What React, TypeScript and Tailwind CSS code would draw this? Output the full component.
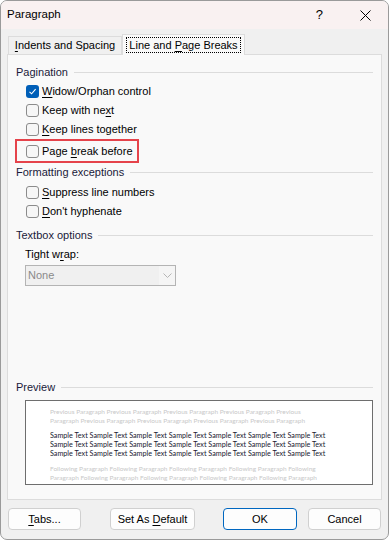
import React from 'react';

const font = { fontFamily: '"Segoe UI", "Liberation Sans", Arial, sans-serif' };

function U({ children }: { children: React.ReactNode }) {
  return <span className="underline underline-offset-2 decoration-1">{children}</span>;
}

function Check({ checked, label }: { checked?: boolean; label: React.ReactNode }) {
  return (
    <div className="flex items-center h-[19px] whitespace-nowrap">
      {checked ? (
        <div className="w-[13px] h-[13px] shrink-0 rounded-[3px] bg-[#005fb8] flex items-center justify-center">
          <svg width="9" height="9" viewBox="0 0 9 9" fill="none">
            <path d="M1.5 4.8 L3.6 6.8 L7.6 2.2" stroke="white" strokeWidth="1.1" />
          </svg>
        </div>
      ) : (
        <div className="w-[13px] h-[13px] shrink-0 rounded-[3px] border border-[#8b8b8b] bg-[#f6f6f6]" />
      )}
      <span className="ml-[3px] text-[11px] text-black leading-none">{label}</span>
    </div>
  );
}

function Section({ title }: { title: string }) {
  return (
    <div className="flex items-center h-[18px]">
      <span className="text-[11px] text-[#1a1a3a] leading-none">{title}</span>
      <div className="flex-1 ml-[6px] h-px bg-[#dcdcdc]" />
    </div>
  );
}

function Btn({ children, primary, w }: { children: React.ReactNode; primary?: boolean; w: string }) {
  return (
    <div
      className={`${w} h-[22px] rounded-[4px] border bg-[#fdfdfd] flex items-center justify-center text-[11px] text-black ${
        primary ? 'border-[#0067c0]' : 'border-[#d0d0d0]'
      }`}
    >
      {children}
    </div>
  );
}

const prev = Array(10).fill('Previous Paragraph').join(' ');
const sample = Array(21).fill('Sample Text').join(' ');
const follow = Array(16).fill('Following Paragraph').join(' ');

export default function App() {
  return (
    <div style={font} className="w-[389px] h-[540px] bg-white">
      <div className="w-full h-full bg-[#f0f0f0] border border-[#9a9a9a] rounded-[7px] overflow-hidden flex flex-col">
        {/* Title bar */}
        <div className="h-[28px] bg-[#f9f1f1] flex items-center shrink-0">
          <span className="ml-[6px] text-[11.5px] text-black">Paragraph</span>
          <span className="ml-auto mr-[37px] text-[13px] text-black">?</span>
          <svg width="11" height="11" viewBox="0 0 11 11" className="mr-[17px]">
            <path d="M0.5 0.5 L10.5 10.5 M10.5 0.5 L0.5 10.5" stroke="black" strokeWidth="1" />
          </svg>
        </div>

        {/* Tabs */}
        <div className="flex items-end h-[24px] pl-[7px] shrink-0 mt-[1px]">
          <div className="h-[18px] w-[114px] border border-b-0 border-[#dcdcdc] bg-[#f0f0f0] flex items-center justify-center text-[11px] text-black">
            <span><U>I</U>ndents and Spacing</span>
          </div>
          <div className="h-[21px] w-[123px] border border-b-0 border-[#dcdcdc] bg-[#f9f9f9] flex items-center justify-center text-[11px] text-black relative z-10 -mb-px">
            <span className="border border-dotted border-black px-[2px] leading-[14px]">
              Line and <U>P</U>age Breaks
            </span>
          </div>
        </div>

        {/* Panel */}
        <div className="mx-[6px] h-[446px] border border-[#dcdcdc] bg-[#f9f9f9] pl-[8px] pr-[8px] pt-[8px] flex flex-col shrink-0">
          <Section title="Pagination" />
          <div className="pl-[10px] mt-[1px] flex flex-col">
            <Check checked label={<><U>W</U>idow/Orphan control</>} />
            <Check label={<>Keep with ne<U>x</U>t</>} />
            <Check label={<><U>K</U>eep lines together</>} />
            <div className="-ml-[11px] w-[124px] h-[24px] border-2 border-[#e5434b] pl-[9px] flex items-center">
              <Check label={<>Page <U>b</U>reak before</>} />
            </div>
          </div>
          <Section title="Formatting exceptions" />
          <div className="pl-[10px] mt-[2px] flex flex-col">
            <Check label={<><U>S</U>uppress line numbers</>} />
            <Check label={<><U>D</U>on't hyphenate</>} />
          </div>
          <div className="mt-[5px]">
            <Section title="Textbox options" />
          </div>
          <div className="pl-[9px] mt-[3px] text-[11px] text-black leading-none h-[15px] flex items-center">
            <span>Tight w<U>r</U>ap:</span>
          </div>
          <div className="ml-[9px] mt-[3px] w-[151px] h-[21px] border border-[#b4b4b4] bg-[#f0f0f0] flex items-center">
            <span className="ml-[2px] text-[11px] text-[#8a8a8a]">None</span>
            <div className="ml-auto w-[16px] h-full bg-[#f5f5f5] flex items-center justify-center">
              <svg width="9" height="6" viewBox="0 0 9 6">
                <path d="M0.5 0.5 L4.5 4.5 L8.5 0.5" stroke="#b5b5b5" fill="none" />
              </svg>
            </div>
          </div>

          <div className="mt-[92px]">
            <Section title="Preview" />
          </div>
          <div className="ml-[9px] mt-[4px] w-[348px] h-[85px] border border-[#6e6e6e] bg-white overflow-hidden">
            <div
              className="ml-[24px] pt-[6px] leading-[9px]"
              style={{ fontFamily: 'Lato, "Noto Sans", sans-serif' }}
            >
              <p className="w-[270px] text-[6.5px] text-[#c8c8c8] h-[18px] overflow-hidden">{prev}</p>
              <p className="w-[283px] text-[7.2px] text-[#202030] mt-[6px] h-[27px] overflow-hidden">{sample}</p>
              <p className="w-[276px] text-[6.5px] text-[#c8c8c8] mt-[6px]">{follow}</p>
            </div>
          </div>
        </div>

        {/* Buttons */}
        <div className="flex items-center mt-[8px] pl-[7px]">
          <Btn w="w-[73px]">
            <span><U>T</U>abs...</span>
          </Btn>
          <div className="ml-[29px]">
            <Btn w="w-[85px]">
              <span>Set As <U>D</U>efault</span>
            </Btn>
          </div>
          <div className="ml-[28px]">
            <Btn w="w-[74px]" primary>
              <span>OK</span>
            </Btn>
          </div>
          <div className="ml-[11px]">
            <Btn w="w-[73px]">
              <span>Cancel</span>
            </Btn>
          </div>
        </div>
      </div>
    </div>
  );
}
